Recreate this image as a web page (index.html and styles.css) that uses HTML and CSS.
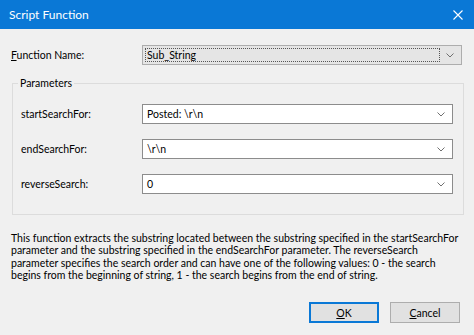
FILE: index.html
```
<!DOCTYPE html>
<html lang="en">
  <head>
    <meta charset="UTF-8" />
    <title>Script Function</title>
    <link rel="stylesheet" href="styles.css">
  </head>
  <body>
    <div class="dialog">
      <div class="titlebar">
        <span class="title">Script Function</span>
        <svg class="close" width="10" height="10" viewBox="0 0 10 10">
          <path d="M0.5 0.5 L9.5 9.5 M9.5 0.5 L0.5 9.5" stroke="#fff" stroke-width="1.1" fill="none" />
        </svg>
      </div>
      <div class="content">
        <div class="row name-row">
          <span class="label"><u>F</u>unction Name:</span>
          <div class="combo list">
            <span class="focus">Sub_String</span>
            <svg class="arrow" width="8" height="5" viewBox="0 0 8 5"><path d="M0.5 0.5 L4 4 L7.5 0.5" stroke="#707070" fill="none" /></svg>
          </div>
        </div>
        <fieldset class="group">
          <legend>Parameters</legend>
          <div class="row">
            <span class="label">startSearchFor:</span>
            <div class="combo">
              <span class="value">Posted: \r\n</span>
              <svg class="arrow" width="8" height="5" viewBox="0 0 8 5"><path d="M0.5 0.5 L4 4 L7.5 0.5" stroke="#707070" fill="none" /></svg>
            </div>
          </div>
          <div class="row">
            <span class="label">endSearchFor:</span>
            <div class="combo">
              <span class="value">\r\n</span>
              <svg class="arrow" width="8" height="5" viewBox="0 0 8 5"><path d="M0.5 0.5 L4 4 L7.5 0.5" stroke="#707070" fill="none" /></svg>
            </div>
          </div>
          <div class="row">
            <span class="label">reverseSearch:</span>
            <div class="combo">
              <span class="value">0</span>
              <svg class="arrow" width="8" height="5" viewBox="0 0 8 5"><path d="M0.5 0.5 L4 4 L7.5 0.5" stroke="#707070" fill="none" /></svg>
            </div>
          </div>
        </fieldset>
        <p class="desc">
          This function extracts the substring located between the substring specified in the startSearchFor<br>
          parameter and the substring specified in the endSearchFor parameter. The reverseSearch<br>
          parameter specifies the search order and can have one of the following values: 0 - the search<br>
          begins from the beginning of string, 1 - the search begins from the end of string.
        </p>
        <div class="buttons">
          <button class="btn default"><u>O</u>K</button>
          <button class="btn"><u>C</u>ancel</button>
        </div>
      </div>
    </div>
  </body>
</html>
```

FILE: styles.css
```
* {
  margin: 0;
  padding: 0;
  box-sizing: border-box;
}
body {
  width: 474px;
  height: 335px;
  overflow: hidden;
  font-family: "Lato", "Liberation Sans", sans-serif;
  font-size: 10.5px;
  color: #000;
  background: #f0f0f0;
}
.dialog {
  height: 335px;
  display: flex;
  flex-direction: column;
}
.titlebar {
  height: 29px;
  flex: none;
  background: #0a78d6;
  display: flex;
  align-items: center;
  justify-content: space-between;
  padding: 0 11px 0 9px;
}
.titlebar .title {
  color: #fff;
  font-size: 12px;
}
.content {
  flex: 1;
  display: flex;
  flex-direction: column;
  padding: 16px 0 12px;
}
.row {
  display: flex;
  align-items: center;
  height: 20px;
}
.label {
  width: 121px;
  flex: none;
}
.name-row {
  padding: 0 12px 0 11px;
}
.name-row .label {
  width: 131px;
}
.combo {
  flex: 1;
  height: 20px;
  display: flex;
  align-items: center;
  justify-content: space-between;
  background: #fff;
  border: 1px solid #8c8c8c;
  padding: 0 7px 0 4px;
}
.combo.list {
  background: #e5e5e5;
  border-color: #adadad;
  padding: 2px 7px 2px 2px;
}
.combo .focus {
  flex: 1;
  height: 14px;
  line-height: 12px;
  border: 1px dotted #555;
  padding-left: 1px;
  margin-right: 6px;
}
.group {
  margin: 11px 10px 0 12px;
  border: 1px solid #dcdcdc;
  padding: 14px 10px 20px 8px;
  display: flex;
  flex-direction: column;
  gap: 15px;
}
.group legend {
  padding: 0 2px;
  margin-left: -3px;
  line-height: 14px;
}
.desc {
  margin: 17px 10px 0 11px;
  line-height: 12.4px;
  white-space: nowrap;
}
.buttons {
  margin-top: auto;
  display: flex;
  justify-content: flex-end;
  gap: 11px;
  padding-right: 14px;
}
.btn {
  width: 70px;
  height: 21px;
  font-family: inherit;
  font-size: 10.5px;
  background: #e1e1e1;
  border: 1px solid #adadad;
  color: #000;
}
.btn.default {
  border: 2px solid #0a78d6;
}
```
